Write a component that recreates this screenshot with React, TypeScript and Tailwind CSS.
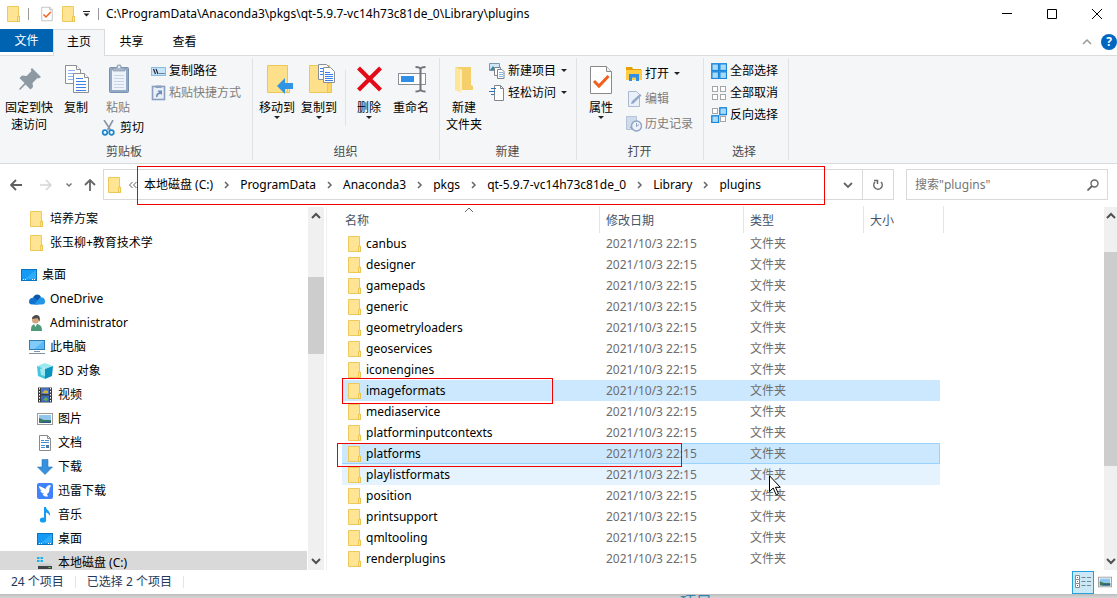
import React from 'react';
import clsx from 'clsx';

type IconProps = { className?: string };

const FolderIcon = ({ className = 'h-4 w-4' }: IconProps) => (
  <svg viewBox="0 0 16 16" className={clsx('shrink-0', className)}>
    <path d="M1.5.5h11v9.500h1v5.500h-12z" fill="#ffe494" stroke="#ecc95a" />
    <path d="M11.500 15.500v-5h2v5z" fill="#ffe69c" stroke="#e8bf45" strokeWidth=".8" />
  </svg>
);

const CheckDoc = ({ className }: IconProps) => (
  <svg viewBox="0 0 24 32" className={clsx('shrink-0', className)}>
    <path d="M1.500 2.500h16l5 5v22h-21z" fill="#fff" stroke="#8a8a8a" />
    <path d="M17.500 2.500v5h5" fill="#eee" stroke="#8a8a8a" />
    <path d="M5 17l5 5 9.500-10" fill="none" stroke="#f2601c" strokeWidth="3" />
  </svg>
);

const Caret = () => (
  <svg viewBox="0 0 6 3" className="h-[3px] w-1.5 shrink-0">
    <path d="M0 0h6L3 3z" fill="#222" />
  </svg>
);

const Chevron = ({ d, className = '', color = '#666', width = 1.5 }: { d: string; className?: string; color?: string; width?: number }) => (
  <svg viewBox="0 0 10 10" className={clsx('h-2.5 w-2.5 shrink-0', className)}>
    <path d={d} fill="none" stroke={color} strokeWidth={width} />
  </svg>
);

const UP = 'M1 7l4-4 4 4';
const DOWN = 'M1 3l4 4 4-4';
const RIGHT = 'M3 2l3 3-3 3';

const PinIcon = () => (
  <svg viewBox="0 0 32 32" className="h-8 w-8">
    <path d="M18 5l9 9-2.500 1.500-1-.5-5 5 .5 4-2.500 2.500-5-5L6 27l-1-1 5.500-6-5-5L8 12.500l4.500.5 5-5-.8-1.500z" fill="#8d9aa3" transform="translate(1 -1)" />
  </svg>
);

const CopyIcon = () => (
  <svg viewBox="0 0 32 32" className="h-8 w-8">
    <g fill="#fff" stroke="#8b8f96">
      <path d="M5.500 1.500h11l4 4v14h-15z" />
      <path d="M16.500 1.500v4h4" />
    </g>
    <path d="M8 6.500h7M8 9.500h10M8 12.500h10M8 15.500h10" stroke="#8fb2ea" />
    <g fill="#fff" stroke="#8b8f96">
      <path d="M13.500 9.500h11l4 4v15h-15z" />
      <path d="M24.500 9.500v4h4" />
    </g>
    <path d="M16 14.500h7M16 17.500h10M16 20.500h10M16 23.500h10M16 26.500h10" stroke="#3a7ee8" />
  </svg>
);

const PasteIcon = () => (
  <svg viewBox="0 0 32 32" className="h-8 w-8">
    <rect x="7.500" y="3.500" width="19" height="25" rx="1" fill="#91a8c8" stroke="#7c90b0" />
    <path d="M10 6h14v20H10z" fill="#eef3fa" />
    <path d="M12 11.500h10M12 14.500h10M12 17.500h10M12 20.500h10M12 23.500h10" stroke="#c9d5e6" />
    <path d="M11 7V4h3.500l1-3h3l1 3H23v3z" fill="#a9b7ca" stroke="#8797ae" strokeWidth=".7" />
    <circle cx="17" cy="3" r="1" fill="#fff" />
  </svg>
);

const ScissorsIcon = () => (
  <svg viewBox="0 0 16 16" className="h-4 w-4">
    <path d="M3 0l6.500 10M12 0L6.500 10" stroke="#8a96a3" strokeWidth="1.600" />
    <circle cx="4" cy="12.500" r="2.300" fill="none" stroke="#1c86cf" strokeWidth="1.700" />
    <circle cx="10.500" cy="12.500" r="2.300" fill="none" stroke="#1c86cf" strokeWidth="1.700" />
  </svg>
);

const PathIcon = () => (
  <svg viewBox="0 0 16 16" className="h-4 w-4">
    <rect x="1.500" y="4.500" width="14" height="8" fill="#c5e4fa" stroke="#88bce0" />
    <path d="M3.500 6l2 5M6 6l2 5M9.500 10.500h1M11.500 10.500h1M13.500 10.500h1" stroke="#223" strokeWidth="1.200" />
  </svg>
);

const ShortcutIcon = () => (
  <svg viewBox="0 0 16 16" className="h-4 w-4">
    <rect x="2.500" y="1.500" width="12" height="13" fill="#e9eff7" stroke="#8b9fbe" strokeWidth="1.600" />
    <path d="M5.500 .5h6v2.500h-6z" fill="#8b9fbe" />
    <path d="M6 12c0-3 1-4 3-4.500L7.500 5.500H12v4.500L10.500 8.700C8.500 9.300 7.500 10 7.500 12z" fill="#6f8bb8" />
  </svg>
);

const MoveToIcon = () => (
  <svg viewBox="0 0 32 32" className="h-8 w-8">
    <path d="M6.500 1.500h20v18h2v9h-22z" fill="#ffe08a" stroke="#eac65b" />
    <path d="M26.500 20v8.500h2V20z" fill="#ffe9ab" stroke="#e8bf45" strokeWidth=".7" />
    <path d="M16 22l8-8v5h8v6h-8v5z" fill="#3294e4" />
  </svg>
);

const CopyToIcon = () => (
  <svg viewBox="0 0 32 32" className="h-8 w-8">
    <path d="M6.500 1.500h20v18h2v9h-22z" fill="#ffe08a" stroke="#eac65b" />
    <path d="M24.500 28.500v-9l4-1v10z" fill="#ffd766" stroke="#e8bf45" strokeWidth=".8" />
    <path d="M15.500.5h8l3 3v12h-11z" fill="#fff" stroke="#8b8f96" />
    <path d="M17 4.500h6M17 7.500h6M17 10.500h6" stroke="#3a7ee8" />
    <path d="M20.500 3.500h7l4 4v11h-11z" fill="#fff" stroke="#8b8f96" />
    <path d="M22 8.500h5M22 10.500h8M22 12.500h8M22 14.500h8M22 16.500h8" stroke="#3a7ee8" />
  </svg>
);

const DeleteIcon = () => (
  <svg viewBox="0 0 32 32" className="h-8 w-8">
    <path d="M5.500 4l22 22M27.500 4l-22 22" stroke="#e30b17" strokeWidth="4.200" />
  </svg>
);

const RenameIcon = () => (
  <svg viewBox="0 0 32 32" className="h-8 w-8">
    <rect x="3.500" y="9.500" width="27" height="11" fill="#fff" stroke="#8b8f96" />
    <path d="M6 12h13v6H6z" fill="#2f8ee6" />
    <path d="M20.500 3c3 0 4.500.5 5 2 .5-1.500 2-2 5-2M25.500 4v23M20.500 27.500c3 0 4.500-.5 5-2 .5 1.500 2 2 5 2" fill="none" stroke="#6f747a" strokeWidth="2" />
  </svg>
);

const NewFolderIcon = () => (
  <svg viewBox="0 0 32 32" className="h-8 w-8">
    <path d="M8 3h15v18l2 1v4H8z" fill="#f5cf6a" />
    <path d="M7 3l7 3v23l-7-3z" fill="#ffe59a" />
    <path d="M14 6v23l-2-1V5z" fill="#fff0bd" />
  </svg>
);

const NewItemIcon = () => (
  <svg viewBox="0 0 16 16" className="h-4 w-4">
    <path d="M.5.5h10v7H.5z" fill="#cfe7f7" stroke="#7d98ab" />
    <path d="M1 7l3-4 3 4z" fill="#3b87a8" />
    <path d="M5.500 4.500h6v8h-6z" fill="#fff" stroke="#7e858c" />
    <path d="M8.500 6.500h4.500l2 2v7H8.500z" fill="#fff" stroke="#7e858c" />
    <path d="M10 9.500h4M10 11.500h4M10 13.500h4" stroke="#8bb5df" />
  </svg>
);

const EasyAccessIcon = () => (
  <svg viewBox="0 0 16 16" className="h-4 w-4">
    <path d="M5.500.5h6l3 3v12h-9z" fill="#fff" stroke="#7e858c" />
    <path d="M11.500.5v3h3" fill="none" stroke="#7e858c" />
    <path d="M2 3.500h5M0 6.500h6M2 9.500h3" stroke="#2678c2" strokeWidth="1.200" />
  </svg>
);

const OpenIcon = () => (
  <svg viewBox="0 0 16 16" className="h-4 w-4">
    <path d="M0 1h6l1 2h8v3H0z" fill="#e5a100" />
    <path d="M0 4h16v10H0z" fill="#ffcc44" />
    <path d="M3 15V8h10v7h-3v-3.500H6V15z" fill="#2f8ee6" />
  </svg>
);

const EditIcon = () => (
  <svg viewBox="0 0 16 16" className="h-4 w-4">
    <path d="M2.500.5h8l3 3v12h-11z" fill="#eaf0f8" stroke="#a9b9d0" />
    <path d="M5 13l1-3 8-7 1.500 1.500-8 8z" fill="#94a8c8" />
  </svg>
);

const HistoryIcon = () => (
  <svg viewBox="0 0 16 16" className="h-4 w-4">
    <path d="M.5.500h10v13H.5z" fill="#cfdaea" stroke="#b5c3d8" />
    <circle cx="10.500" cy="10" r="5" fill="#eef2f8" stroke="#8ea2c2" strokeWidth="1.400" />
    <path d="M10.500 7v3.500L13 8.500M4 11l2 2" stroke="#8ea2c2" fill="none" />
  </svg>
);

// Four small squares; the filled ones are drawn in blue
const SelectIcon = ({ on }: { on: boolean[] }) => (
  <svg viewBox="0 0 16 16" className="h-4 w-4">
    {on.map((filled, i) => (
      <rect
        key={i}
        x={(i % 2) * 8 + (filled ? 0.8 : 1.5)}
        y={Math.floor(i / 2) * 8 + (filled ? 0.8 : 1.5)}
        width={filled ? 6.8 : 5}
        height={filled ? 6.8 : 5}
        fill={filled ? '#a8dbfb' : '#fff'}
        stroke={filled ? '#1b87db' : '#a5a5a5'}
        strokeWidth={filled ? 1.4 : 1}
      />
    ))}
  </svg>
);

const DesktopIcon = () => (
  <svg viewBox="0 0 16 16" className="h-4 w-4 shrink-0">
    <rect x=".5" y="2.500" width="15" height="11" fill="#159bf5" stroke="#0a74c0" />
    <path d="M15 3v9L4 12z" fill="#46b4ff" opacity=".6" />
    <path d="M2 12.500h1M4 12.500h1M11 12.500h1M13 12.500h1" stroke="#fff" />
  </svg>
);

const OneDriveIcon = () => (
  <svg viewBox="0 0 16 16" className="h-4 w-4 shrink-0">
    <path d="M4 7C5 3 10 2 12 6l-3 4-5-1z" fill="#0a56a8" />
    <path d="M0 10.500C0 7 4 6 6 7.500l6 4.500-3 1.500H3c-2 0-3-1-3-3z" fill="#1273ce" />
    <path d="M5 13.500L11 6.500c4-1 5 2.500 5 4 0 2-1 3-3 3z" fill="#2496e8" />
  </svg>
);

const UserIcon = () => (
  <svg viewBox="0 0 16 16" className="h-4 w-4 shrink-0">
    <path d="M2 16c0-5 1-7 5-7s6 2 6 7z" fill="#4d9a7a" />
    <path d="M5 9l1.500 3L8 9z" fill="#fff" />
    <circle cx="6.500" cy="5" r="3.500" fill="#d3a57e" />
    <path d="M3 4C3 1 6 0 7.500 0c3 0 4 3 3 6.500L8.500 3z" fill="#4a4a4a" />
  </svg>
);

const ComputerIcon = () => (
  <svg viewBox="0 0 16 16" className="h-4 w-4 shrink-0">
    <rect x=".5" y="1.500" width="15" height="9" fill="#5bb9f5" stroke="#2c7db4" />
    <path d="M1 2h14L5 10H1z" fill="#90d3fb" opacity=".7" />
    <path d="M5 12.500h6M0 14.500h16" stroke="#8093a8" />
  </svg>
);

const CubeIcon = () => (
  <svg viewBox="0 0 16 16" className="h-4 w-4 shrink-0">
    <path d="M0 3l8-3 8 3-8 3z" fill="#9be8f0" />
    <path d="M0 3l8 3v10l-7-3z" fill="#43c6dc" />
    <path d="M16 3L8 6v10l7-3z" fill="#0a93bd" />
    <path d="M3 6l5-2v9l-4-1z" fill="#c8f5f8" opacity=".7" />
  </svg>
);

const VideoIcon = () => (
  <svg viewBox="0 0 16 16" className="h-4 w-4 shrink-0">
    <path d="M1 .5h14v15H1z" fill="#3b3b3b" />
    <path d="M4 1h8v6H4z" fill="#4473c9" />
    <path d="M4 8.500h8V15H4z" fill="#3c68bb" />
    <path d="M5 6l3-3 3 1v2.500z" fill="#d4b23a" />
    <path d="M6 13l3-3 2 2-1 2z" fill="#64ad48" />
    <path d="M2.500 1v14M13.500 1v14" stroke="#fff" strokeDasharray="1.500 1.500" />
  </svg>
);

const PictureIcon = ({ className = 'h-4 w-4' }: IconProps) => (
  <svg viewBox="0 0 16 16" className={clsx('shrink-0', className)}>
    <rect x=".5" y="2.500" width="15" height="11" fill="#fff" stroke="#9a9a9a" />
    <path d="M2 4h12v8H2z" fill="#8fc6f0" />
    <path d="M2 7l5 2 7 0v3H2z" fill="#3f7a5e" />
    <path d="M7 10.500h7V12H4z" fill="#2a5a86" />
  </svg>
);

const DocumentIcon = () => (
  <svg viewBox="0 0 16 16" className="h-4 w-4 shrink-0">
    <path d="M2.500.5h8l3 3v12h-11z" fill="#fff" stroke="#8a8a8a" />
    <path d="M10.500.5v3h3" fill="none" stroke="#8a8a8a" />
    <path d="M4 5.500h3M8 5.500h4M4 7.500h8M4 10.500h4M4 12.500h4" stroke="#3d8fd1" />
    <path d="M9 10h3v3H9z" fill="#4b79a5" />
  </svg>
);

const DownloadIcon = () => (
  <svg viewBox="0 0 16 16" className="h-4 w-4 shrink-0">
    <path d="M5 .5h6V8h4.500L8 15.500.5 8H5z" fill="#3790dd" stroke="#2876bd" strokeWidth=".6" />
  </svg>
);

const ThunderIcon = () => (
  <svg viewBox="0 0 16 16" className="h-4 w-4 shrink-0">
    <rect width="16" height="16" rx="2" fill="#3f82fc" />
    <path d="M2 3c2 .5 4 1.500 6.500 3C9.500 3 11.500 1.800 14 2l-1 1.200 1 .5-1.500 1c.3 3.500-1 5.500-2.500 6.300L11 13.500c-2.500.3-4.500-.5-5.500-2.300l1.800-.4C4.800 10.200 3.600 9 3.300 7.500l1.700.3C3.200 6.500 2 5 2 3z" fill="#fff" />
  </svg>
);

const MusicIcon = () => (
  <svg viewBox="0 0 16 16" className="h-4 w-4 shrink-0">
    <path d="M7 0h2c0 3 5 4 4 9-1-2-2-3-4-3.500V13H7z" fill="#159cf0" />
    <ellipse cx="6" cy="13" rx="3.200" ry="2.600" fill="#159cf0" />
  </svg>
);

const DriveIcon = () => (
  <svg viewBox="0 0 16 16" className="h-4 w-4 shrink-0">
    <path d="M0 2h2.500v2H0zM3.500 2H6v2H3.500zM0 5h2.500v2H0zM3.500 5H6v2H3.500z" fill="#12b1ef" />
    <path d="M3 8.500h10l2 2.500H1z" fill="#c9ccd0" />
    <path d="M1 11h14v3H1z" fill="#404346" />
    <path d="M11.500 12.500h2" stroke="#5ee05a" />
  </svg>
);

const DetailsIcon = () => (
  <svg viewBox="0 0 16 14" className="h-3.5 w-4">
    <path d="M.5.5h4v4h-4zM.5 4.500h4v4h-4zM.5 8.500h4v4h-4z" fill="#fff" stroke="#8b8b8b" />
    <path d="M2 2.500h1M2 6.500h1" stroke="#2776b8" />
    <path d="M2 10.500h1" stroke="#c0392b" />
    <path d="M6.500 2.500h4M12 2.500h4M6.500 6.500h4M12 6.500h4M6.500 10.500h4M12 10.500h4" stroke="#77858c" />
  </svg>
);

type BigButtonProps = {
  icon: React.ReactNode;
  label: string;
  second?: string;
  caret?: boolean;
  className?: string;
  disabled?: boolean;
};

const BigButton = ({ icon, label, second, caret, className = 'w-[42px]', disabled }: BigButtonProps) => (
  <button disabled={disabled} className={clsx('flex shrink-0 flex-col items-center pt-2 leading-[17px] whitespace-nowrap', disabled && 'text-[#7d7d7d]', className)}>
    {icon}
    <span className="mt-[3px]">{label}</span>
    {second && <span>{second}</span>}
    {caret && <Caret />}
  </button>
);

type SmallButtonProps = { icon: React.ReactNode; label: string; caret?: boolean; disabled?: boolean; className?: string };

const SmallButton = ({ icon, label, caret, disabled, className = 'h-[22px] gap-[3px]' }: SmallButtonProps) => (
  <button disabled={disabled} className={clsx('flex items-center whitespace-nowrap', disabled && 'text-[#7d7d7d]', className)}>
    {icon}
    <span>{label}</span>
    {caret && <span className="ml-0.5 pb-px"><Caret /></span>}
  </button>
);

const RibbonGroup = ({ title, className, children }: { title: string; className: string; children: React.ReactNode }) => (
  <section className={clsx('relative flex shrink-0 flex-col', className)}>
    <div className="flex flex-1">{children}</div>
    <div className="pr-[5px] pb-[3px] text-center leading-4 text-[#4b4b4b]">{title}</div>
    <span className="absolute top-0.5 right-0 bottom-[3px] w-px bg-[#e1e2e4]" />
  </section>
);

const Scrollbar = ({ className, thumb }: { className: string; thumb: string }) => (
  <div className={clsx('flex shrink-0 flex-col items-center bg-[#f0f0f0]', className)}>
    <div className="flex h-[18px] items-center"><Chevron d={UP} color="#505050" width={2} /></div>
    <div className="flex w-full flex-1 flex-col">
      <div className={clsx('w-full bg-[#cdcdcd]', thumb)} />
    </div>
    <div className="flex h-[18px] items-center"><Chevron d={DOWN} color="#505050" width={2} /></div>
  </div>
);

const navItems = [
  { label: '培养方案', icon: <FolderIcon />, pad: 'pl-[29px]' },
  { label: '张玉柳+教育技术学', icon: <FolderIcon />, pad: 'pl-[29px]' },
  { label: '桌面', icon: <DesktopIcon />, pad: 'mt-2 pl-[21px]' },
  { label: 'OneDrive', icon: <OneDriveIcon />, pad: 'pl-[29px]' },
  { label: 'Administrator', icon: <UserIcon />, pad: 'pl-[29px]' },
  { label: '此电脑', icon: <ComputerIcon />, pad: 'pl-[29px]' },
  { label: '3D 对象', icon: <CubeIcon />, pad: 'pl-[37px]' },
  { label: '视频', icon: <VideoIcon />, pad: 'pl-[37px]' },
  { label: '图片', icon: <PictureIcon />, pad: 'pl-[37px]' },
  { label: '文档', icon: <DocumentIcon />, pad: 'pl-[37px]' },
  { label: '下载', icon: <DownloadIcon />, pad: 'pl-[37px]' },
  { label: '迅雷下载', icon: <ThunderIcon />, pad: 'pl-[37px]' },
  { label: '音乐', icon: <MusicIcon />, pad: 'pl-[37px]' },
  { label: '桌面', icon: <DesktopIcon />, pad: 'pl-[37px]' },
  { label: '本地磁盘 (C:)', icon: <DriveIcon />, pad: 'pl-[37px]', active: true },
];

const crumbs = ['本地磁盘 (C:)', 'ProgramData', 'Anaconda3', 'pkgs', 'qt-5.9.7-vc14h73c81de_0', 'Library', 'plugins'];

const files = [
  'canbus', 'designer', 'gamepads', 'generic', 'geometryloaders', 'geoservices', 'iconengines', 'imageformats',
  'mediaservice', 'platforminputcontexts', 'platforms', 'playlistformats', 'position', 'printsupport', 'qmltooling', 'renderplugins',
];

const rowStyle: Record<string, string> = {
  imageformats: 'bg-[#cce8ff]',
  platforms: 'bg-[#cce8ff] border-y border-[#99d1ff]',
  playlistformats: 'bg-[#e5f3ff]',
};

// Red frames that point out the two selected folders
const frames: Record<string, string> = {
  imageformats: '-top-0.5 left-0 h-[26px] w-[211px]',
  platforms: '-top-px -left-[5px] h-6 w-[345px]',
};

const TitleBar = () => (
  <header className="flex h-[29px] shrink-0 items-center pb-px">
    <div className="flex items-center pl-[6px]">
      <FolderIcon />
      <span className="ml-1.5 h-3 w-px bg-[#999]" />
      <CheckDoc className="ml-[11px] h-4 w-3.5" />
      <FolderIcon className="ml-[7px] h-4 w-4" />
      <svg viewBox="0 0 7 6" className="ml-[6px] h-1.5 w-[7px]">
        <path d="M0 .5h7" stroke="#222" />
        <path d="M.5 2.500h6l-3 3z" fill="#222" />
      </svg>
      <span className="ml-2 h-3 w-px bg-[#999]" />
    </div>
    <h1 className="ml-[7px] flex-1 truncate leading-4">C:\ProgramData\Anaconda3\pkgs\qt-5.9.7-vc14h73c81de_0\Library\plugins</h1>
    <div className="-mr-0.5 flex">
      <button aria-label="最小化" className="flex h-7 w-[45px] items-center justify-center">
        <svg viewBox="0 0 10 10" className="h-2.5 w-2.5"><path d="M0 4.500h10" stroke="#000" /></svg>
      </button>
      <button aria-label="最大化" className="flex h-7 w-[45px] items-center justify-center">
        <svg viewBox="0 0 10 10" className="h-2.5 w-2.5"><path d="M.5.5h9v9h-9z" stroke="#000" fill="none" /></svg>
      </button>
      <button aria-label="关闭" className="flex h-7 w-[45px] items-center justify-center">
        <svg viewBox="0 0 10 10" className="h-2.5 w-2.5"><path d="M0 0l10 10M10 0L0 10" stroke="#000" /></svg>
      </button>
    </div>
  </header>
);

const Tabs = () => (
  <nav className="flex h-[27px] shrink-0 items-start border-b border-[#dadbdc]">
    <button className="h-[23px] w-[53px] bg-[#0063b1] pt-px text-white">文件</button>
    <button className="h-[27px] w-[52px] border-x border-t border-[#dadbdc] bg-[#f5f6f7] pb-0.5">主页</button>
    <button className="h-[23px] w-[53px] pt-0.5">共享</button>
    <button className="h-[23px] w-[53px] pt-0.5">查看</button>
    <div className="ml-auto flex h-[26px] items-center gap-[9px]">
      <button aria-label="折叠功能区"><Chevron d={UP} color="#999" /></button>
      <button aria-label="帮助" className="h-4 w-4 rounded-full bg-[#0067c0] text-xs leading-4 font-bold text-white">?</button>
    </div>
  </nav>
);

const Ribbon = () => (
  <div className="flex h-[108px] shrink-0 border-b border-[#dadbdc] bg-[#f5f6f7]">
    <RibbonGroup title="剪贴板" className="w-[253px]">
      <BigButton icon={<PinIcon />} label="固定到快" second="速访问" className="w-[58px]" />
      <BigButton icon={<CopyIcon />} label="复制" className="w-9" />
      <div className="ml-1 w-[52px]">
        <BigButton icon={<PasteIcon />} label="粘贴" className="w-10" disabled />
        <SmallButton icon={<ScissorsIcon />} label="剪切" className="h-6 gap-[3px] pl-[3px]" />
      </div>
      <div className="pt-1">
        <SmallButton icon={<PathIcon />} label="复制路径" />
        <SmallButton icon={<ShortcutIcon />} label="粘贴快捷方式" disabled />
      </div>
    </RibbonGroup>
    <RibbonGroup title="组织" className="w-[187px] pl-[3px]">
      <BigButton icon={<MoveToIcon />} label="移动到" caret />
      <BigButton icon={<CopyToIcon />} label="复制到" caret />
      <span className="mt-3.5 ml-[5px] h-14 w-px bg-[#e1e2e4]" />
      <BigButton icon={<DeleteIcon />} label="删除" caret className="ml-0.5 w-[42px]" />
      <BigButton icon={<RenameIcon />} label="重命名" />
    </RibbonGroup>
    <RibbonGroup title="新建" className="w-[137px] pl-[3px]">
      <BigButton icon={<NewFolderIcon />} label="新建" second="文件夹" />
      <div className="pt-1 pl-1">
        <SmallButton icon={<NewItemIcon />} label="新建项目" caret />
        <SmallButton icon={<EasyAccessIcon />} label="轻松访问" caret />
      </div>
    </RibbonGroup>
    <RibbonGroup title="打开" className="w-[127px] pl-[3px]">
      <BigButton icon={<CheckDoc className="h-8 w-6" />} label="属性" caret />
      <div className="pt-[5px] pl-1">
        <SmallButton icon={<OpenIcon />} label="打开" caret className="h-[25px] gap-[3px]" />
        <SmallButton icon={<EditIcon />} label="编辑" disabled className="h-[25px] gap-[3px]" />
        <SmallButton icon={<HistoryIcon />} label="历史记录" disabled className="h-[25px] gap-[3px]" />
      </div>
    </RibbonGroup>
    <RibbonGroup title="选择" className="w-[85px]">
      <div className="pt-1 pl-[7px]">
        <SmallButton icon={<SelectIcon on={[true, true, true, true]} />} label="全部选择" />
        <SmallButton icon={<SelectIcon on={[false, false, false, false]} />} label="全部取消" />
        <SmallButton icon={<SelectIcon on={[false, true, true, false]} />} label="反向选择" />
      </div>
    </RibbonGroup>
  </div>
);

const AddressBar = () => (
  <div className="flex h-[42px] shrink-0 items-center pr-[9px] pb-px">
    <div className="flex w-[103px] shrink-0 items-center pl-2.5">
      <button aria-label="后退">
        <svg viewBox="0 0 12 12" className="h-3 w-3"><path d="M12 6H1M6 1L1 6l5 5" fill="none" stroke="#5f5f5f" strokeWidth="1.800" /></svg>
      </button>
      <button aria-label="前进" className="ml-[18px]">
        <svg viewBox="0 0 12 12" className="h-3 w-3"><path d="M0 6h11M6 1l5 5-5 5" fill="none" stroke="#d5d5d5" strokeWidth="1.500" /></svg>
      </button>
      <button aria-label="最近" className="ml-3"><Chevron d="M2.500 3.500L5 6l2.500-2.500" color="#777" /></button>
      <button aria-label="上移" className="ml-[10px]">
        <svg viewBox="0 0 12 12" className="h-3 w-3"><path d="M6 12V1M1 6l5-5 5 5" fill="none" stroke="#666" strokeWidth="1.800" /></svg>
      </button>
    </div>
    <div className="flex h-[31px] min-w-0 flex-1 items-center border border-[#d9d9d9]">
      <FolderIcon className="ml-[3px] h-4 w-4" />
      <Chevron d="M4.500 2L1.500 5l3 3M8.500 2L5.500 5l3 3" width={1} className="ml-[5px]" />
      <nav className="relative -ml-px flex h-full flex-1 items-center pl-[7px] whitespace-nowrap">
        {crumbs.map((crumb, i) => (
          <React.Fragment key={crumb}>
            {i > 0 && <Chevron d={RIGHT} className="mr-2 ml-[9px]" />}
            <a href="#">{crumb}</a>
          </React.Fragment>
        ))}
        <span className="pointer-events-none absolute -top-1 left-0 h-[39px] w-[688px] border border-[#f00000]" />
      </nav>
      <button aria-label="历史位置" className="flex h-full w-[28px] items-center justify-center"><Chevron d={DOWN} width={1.8} /></button>
      <button aria-label="刷新" className="flex h-full w-[31px] items-center justify-center border-l border-[#d9d9d9]">
        <svg viewBox="0 0 12 12" className="h-3 w-3">
          <path d="M3 3a4.200 4.200 0 1 0 6 0" fill="none" stroke="#666" strokeWidth="1.500" />
          <path d="M2 1.500h3.500V5" fill="none" stroke="#666" strokeWidth="1.500" />
        </svg>
      </button>
    </div>
    <label className="ml-3 flex h-[31px] w-[202px] shrink-0 items-center border border-[#d9d9d9] px-2">
      <input type="text" aria-label="搜索" placeholder={'搜索"plugins"'} className="min-w-0 flex-1 outline-none placeholder:text-[#757575]" />
      <svg viewBox="0 0 12 12" className="h-3 w-3">
        <circle cx="7.500" cy="4.500" r="3.500" fill="none" stroke="#666" strokeWidth="1.400" />
        <path d="M5 7L.5 11.500" stroke="#666" strokeWidth="1.800" />
      </svg>
    </label>
  </div>
);

const Sidebar = () => (
  <aside className="flex w-[327px] shrink-0 border-r border-[#f0f0f0]">
    <ul className="h-full flex-1 overflow-hidden pt-px">
      {navItems.map((item, i) => (
        <li key={i}>
          <a href="#" className={clsx('flex h-6 items-center gap-[5px] whitespace-nowrap', item.pad, item.active && 'mr-px bg-[#d9d9d9]')}>
            {item.icon}
            {item.label}
          </a>
        </li>
      ))}
    </ul>
    <Scrollbar className="mt-px mr-0.5 w-4" thumb="mt-[52px] h-[77px]" />
  </aside>
);

const FileList = () => (
  <main className="flex min-w-0 flex-1">
    <div className="min-w-0 flex-1 overflow-hidden pl-[15px]">
      <table className="w-[602px] table-fixed border-separate border-spacing-0">
        <thead>
          <tr className="text-left leading-4 text-[#44546a] [&>th]:relative [&>th]:h-[27px] [&>th]:p-0 [&>th]:pt-0.5 [&>th]:font-normal">
            <th className="w-[258px] border-r border-[#e5e5e5]">
              <span className="pl-[3px]">名称</span>
              <Chevron d={UP} width={1} className="absolute -top-px left-[122px]" />
            </th>
            <th className="w-36 border-r border-[#e5e5e5]"><span className="pl-1.5">修改日期</span></th>
            <th className="w-[120px] border-r border-[#e5e5e5]"><span className="pl-1.5">类型</span></th>
            <th className="w-[76px]"><span className="pl-1.5">大小</span></th>
            <th className="w-1 border-r border-[#e5e5e5]"></th>
          </tr>
        </thead>
        <tbody>
          {files.map((name) => (
            <tr key={name} className="leading-4 [&>td]:h-[21px] [&>td]:p-0">
              <td className={clsx('relative', rowStyle[name])}>
                <span className="flex items-center gap-[3px] pl-[5px]">
                  <FolderIcon />
                  {name}
                </span>
                {frames[name] && <span className={clsx('pointer-events-none absolute z-10 border border-[#f00000]', frames[name])} />}
              </td>
              <td className={clsx('text-[#6d6d6d]', rowStyle[name])}><span className="pl-1.5">2021/10/3 22:15</span></td>
              <td className={clsx('relative text-[#6d6d6d]', rowStyle[name])}>
                <span className="pl-1.5">文件夹</span>
                {name === 'playlistformats' && (
                  <svg viewBox="0 0 12 21" className="pointer-events-none absolute top-[11px] left-[25px] z-10 h-[21px] w-3">
                    <path d="M.5.8v15.700l3.700-3.500 3 6.800 2.300-1-3-6.500h4.800z" fill="#fff" stroke="#000" />
                  </svg>
                )}
              </td>
              <td className={clsx(rowStyle[name], name === 'platforms' && 'border-r')}></td>
              <td></td>
            </tr>
          ))}
        </tbody>
      </table>
    </div>
    <Scrollbar className="mt-px w-[13px]" thumb="mt-[27px] h-[214px]" />
  </main>
);

const StatusBar = () => (
  <footer className="flex h-6 shrink-0 items-center text-[#1e395b]">
    <span className="pl-[11px]">24 个项目</span>
    <span className="ml-[11px] h-3 w-px bg-[#e5e5e5]" />
    <span className="ml-[11px]">已选择 2 个项目</span>
    <span className="ml-[11px] h-3 w-px bg-[#e5e5e5]" />
    <div className="ml-auto flex items-center gap-1 pr-[5px]">
      <button aria-label="详细信息" className="flex h-[23px] w-[22px] items-center justify-center border border-[#26a0da] bg-[#cbe8f6]"><DetailsIcon /></button>
      <button aria-label="大图标"><PictureIcon className="h-3.5 w-3.5" /></button>
    </div>
  </footer>
);

const App = () => {
  return (
    <div className="flex h-screen flex-col overflow-hidden bg-white font-['Noto_Sans','Noto_Sans_CJK_SC',sans-serif] text-xs text-black">
      <TitleBar />
      <Tabs />
      <Ribbon />
      <AddressBar />
      <div className="flex min-h-0 flex-1">
        <Sidebar />
        <FileList />
      </div>
      <StatusBar />
      {/* Strip of the page behind the window */}
      <div className="flex h-1 shrink-0 overflow-hidden bg-linear-to-b from-[#bdbdbd] to-[#d6d6d6] pl-[680px] text-base leading-4 text-[#2f86b5]">项目</div>
    </div>
  );
};

export default App;
